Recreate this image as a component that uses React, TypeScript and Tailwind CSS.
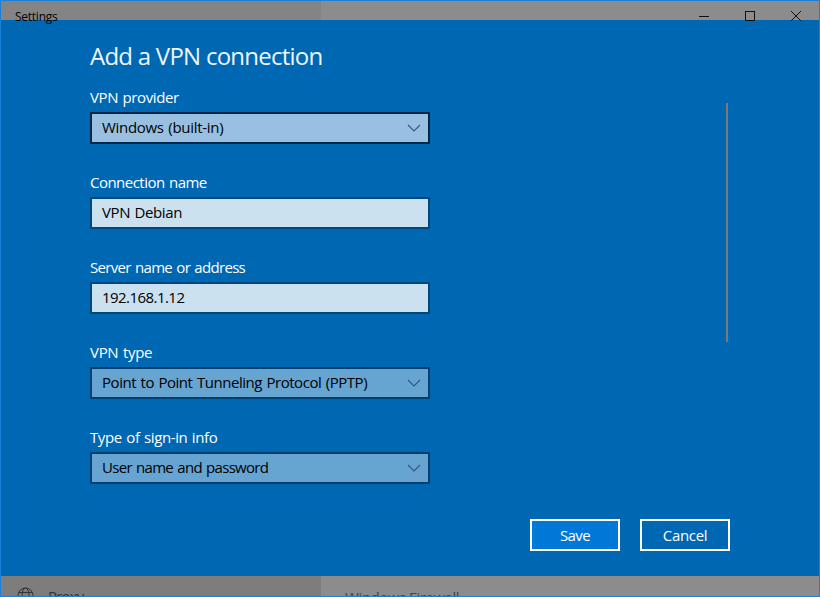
import React from "react";

const fields = [
  {
    label: "VPN provider",
    labelClass: "tracking-[-0.4px]",
    value: "Windows (built-in)",
    valueClass: "tracking-[-0.3px]",
    boxClass: "bg-[#99c0e1] border-[#00274a]",
    select: true,
  },
  {
    label: "Connection name",
    labelClass: "tracking-[-0.52px]",
    value: "VPN Debian",
    valueClass: "tracking-[-0.4px]",
    boxClass: "bg-[#cce1f0] border-[#00477c]",
    select: false,
  },
  {
    label: "Server name or address",
    labelClass: "tracking-[-0.68px]",
    value: "192.168.1.12",
    valueClass: "tracking-[-0.55px]",
    boxClass: "bg-[#cce1f0] border-[#00477c]",
    select: false,
  },
  {
    label: "VPN type",
    labelClass: "tracking-[-0.3px]",
    value: "Point to Point Tunneling Protocol (PPTP)",
    valueClass: "tracking-[-0.46px]",
    boxClass: "bg-[#66a4d2] border-[#003e6d]",
    select: true,
  },
  {
    label: "Type of sign-in info",
    labelClass: "tracking-[-0.4px]",
    value: "User name and password",
    valueClass: "tracking-[-0.7px]",
    boxClass: "bg-[#66a4d2] border-[#003e6d]",
    select: true,
  },
];

const Chevron = () => (
  <svg width="14" height="8" viewBox="0 0 14 8" fill="none" className="mr-[7px]">
    <path d="M1 1l6 6 6-6" stroke="#35587a" strokeWidth="1.1" />
  </svg>
);

const TitleBar = () => (
  <header className="relative z-10 flex h-[19px] bg-[#8c8c8c]">
    <div className="w-[320px] h-full bg-[#848484]">
      <span className="block pl-[14px] pt-[7px] text-[12px] leading-[18px] tracking-[-0.25px] text-black">
        Settings
      </span>
    </div>
    <div className="flex-1 flex justify-end">
      <svg width="120" height="21" viewBox="0 0 120 21" fill="none" stroke="#111" shapeRendering="crispEdges">
        <path d="M0 15.5h10" />
        <rect x="46.5" y="10.5" width="9" height="9" />
        <path d="M92 10l10 10M102 10l-10 10" shapeRendering="auto" />
      </svg>
    </div>
  </header>
);

const BottomStrip = () => (
  <footer className="flex h-[20px] overflow-hidden bg-[#8c8c8c] text-[15px] leading-5">
    <div className="w-[320px] flex items-start gap-[14px] bg-[#7e7d7b] pl-[16px] pt-[11px] text-[#333]">
      <svg width="17" height="17" viewBox="0 0 17 17" fill="none" stroke="#333" className="shrink-0">
        <circle cx="8.5" cy="8.5" r="7.5" />
        <ellipse cx="8.5" cy="8.5" rx="3.5" ry="7.5" />
        <path d="M1.8 5.5h13.4M1.8 11.5h13.4" />
      </svg>
      <span className="-mt-px tracking-[-0.8px]">Proxy</span>
    </div>
    <span className="pl-[24px] pt-[11px] tracking-[-0.45px] text-[#444]">Windows Firewall</span>
  </footer>
);

const App = () => {
  return (
    <div className="w-[820px] h-[597px] overflow-hidden border border-[#1b81d8] bg-[#0067b3] font-['Open_Sans','Noto_Sans',sans-serif]">
      <TitleBar />
      <main className="flex flex-col h-[556px] pl-[89px] text-white">
        <h1 className="mt-[20px] text-[24px] leading-8 tracking-[-0.75px] text-[#eef5fb]">Add a VPN connection</h1>
        <div className="flex justify-between mt-[16px] pr-[91px]">
          <div className="w-[340px] -mt-px">
            {fields.map((field) => (
              <div key={field.label} className="h-[85px] text-[15px] leading-5 [word-spacing:1px]">
                <div className={`h-[25px] whitespace-nowrap ${field.labelClass}`}>{field.label}</div>
                <div className={`flex items-center justify-between h-[32px] border-2 pl-[10px] text-black ${field.boxClass}`}>
                  <span className={`pb-[2px] whitespace-nowrap ${field.valueClass}`}>{field.value}</span>
                  {field.select && <Chevron />}
                </div>
              </div>
            ))}
          </div>
          <div className="w-[2px] h-[239px] mt-[15px] bg-[#7a7a7a]" />
        </div>
        <div className="flex gap-5 mt-[7px] pl-[440px] text-[15px]">
          <button className="w-[90px] h-[32px] border-2 border-white bg-[#0078d7] tracking-[-0.6px]">Save</button>
          <button className="w-[90px] h-[32px] border-2 border-white tracking-[-0.35px]">Cancel</button>
        </div>
      </main>
      <BottomStrip />
    </div>
  );
};

export default App;
